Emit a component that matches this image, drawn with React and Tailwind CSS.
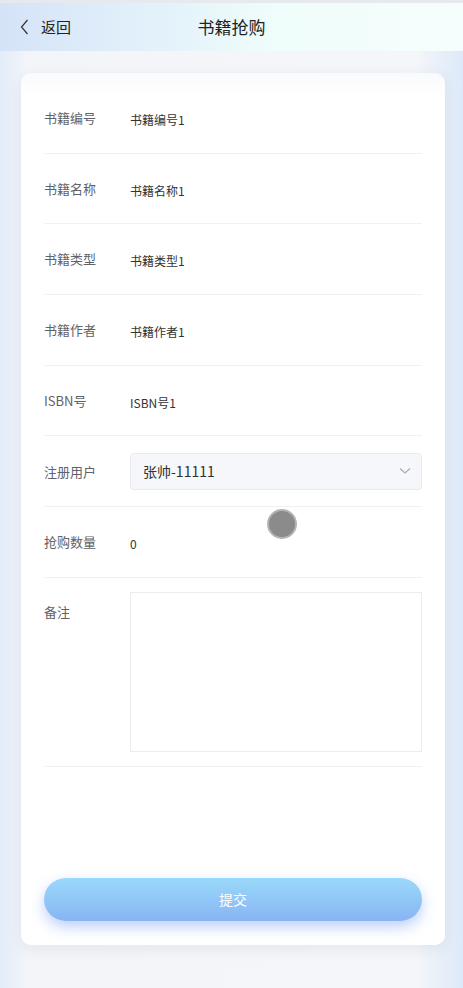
import React from 'react';

const rows = [
  { label: '书籍编号', value: '书籍编号1' },
  { label: '书籍名称', value: '书籍名称1' },
  { label: '书籍类型', value: '书籍类型1' },
  { label: '书籍作者', value: '书籍作者1' },
  { label: 'ISBN号', value: 'ISBN号1' },
];

const font = { fontFamily: '"Noto Sans CJK SC", "Noto Sans", sans-serif' };

const Row = ({ label, children }) => (
  <div className="flex h-[70.7px] items-center border-b border-[#f0f1f3]">
    <div className="w-[86px] shrink-0 text-[13px] text-[#5f6267]">{label}</div>
    <div className="flex-1">{children}</div>
  </div>
);

export default function App() {
  return (
    <div
      className="relative min-h-[988px] w-[463px] bg-[linear-gradient(to_right,#e3ecf9_0%,#f3f5f9_6%,#f4f6f9_90%,#dde9fa_100%)]"
      style={font}
    >
      {/* header */}
      <div className="h-[3px] bg-[#e6e9ee]" />
      <div className="relative flex h-[48px] items-center bg-[linear-gradient(to_right,#d5e3f8_0%,#e3f2fa_35%,#effdfb_60%,#f6fefc_100%)]">
        <div className="flex items-center pl-[20px] text-[15px] text-[#222]">
          <svg width="9" height="16" viewBox="0 0 9 16" className="mr-[12px]">
            <path d="M7.5 1 L1.5 8 L7.5 15" fill="none" stroke="#333" strokeWidth="1.2" />
          </svg>
          返回
        </div>
        <div className="absolute left-0 right-0 text-center text-[17px] text-[#222]">书籍抢购</div>
      </div>

      {/* card */}
      <div className="pl-[21px] pr-[18px] pt-[22px] pb-[43px]">
        <div className="rounded-[10px] bg-[linear-gradient(to_bottom,#f9fafc_0px,#ffffff_22px)] px-[23px] pt-[10px] pb-[24px] shadow-[0_4px_14px_rgba(150,160,180,0.18)]">
          {rows.map((r) => (
            <Row key={r.label} label={r.label}>
              <span className="text-[12px] text-[#333]">{r.value}</span>
            </Row>
          ))}
          <Row label="注册用户">
            <div className="flex h-[37px] items-center justify-between rounded-[4px] border border-[#e8eaee] bg-[#f5f7fa] pl-[12px] pr-[10px] text-[14px] text-[#303133]">
              <span>张帅-11111</span>
              <svg width="12" height="8" viewBox="0 0 12 8">
                <path d="M1 1.5 L6 6 L11 1.5" fill="none" stroke="#a8abb2" strokeWidth="1.2" />
              </svg>
            </div>
          </Row>
          <Row label="抢购数量">
            <span className="text-[12px] text-[#333]">0</span>
          </Row>
          <div className="flex border-b border-[#f0f1f3] py-[14px]">
            <div className="w-[86px] shrink-0 pt-[10px] text-[13px] text-[#5f6267]">备注</div>
            <div className="h-[160px] flex-1 border border-[#ececec] bg-white" />
          </div>
          <div className="mt-[111px] flex h-[43px] items-center justify-center rounded-full bg-[linear-gradient(to_bottom,#9ad9fb,#88b4f2)] text-[14px] text-white shadow-[0_6px_14px_rgba(110,150,245,0.45)]">
            提交
          </div>
        </div>
      </div>

      {/* touch indicator */}
      <div className="absolute left-[267px] top-[509px] h-[30px] w-[30px] rounded-full border-[2px] border-[#b4b4b4] bg-[#8b8b8b]" />
    </div>
  );
}
